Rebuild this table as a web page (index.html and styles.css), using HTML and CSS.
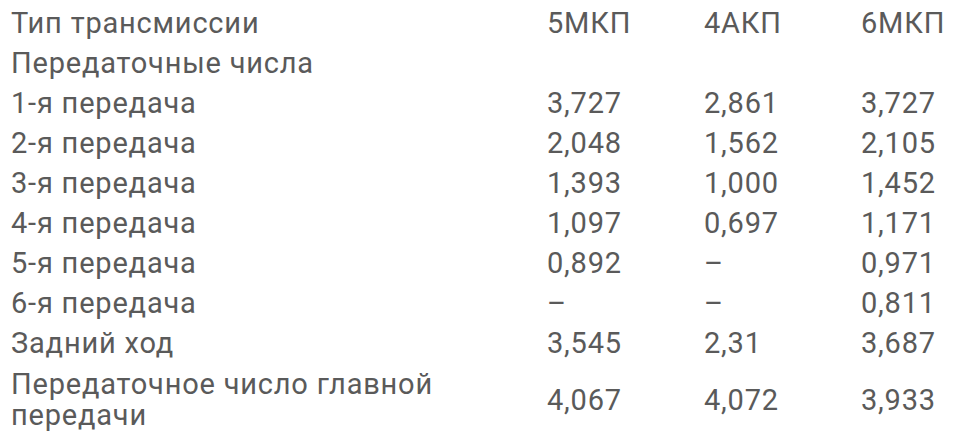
FILE: index.html
```html
<!DOCTYPE html>
<html lang="ru">
<head>
<meta charset="utf-8">
<link rel="stylesheet" href="styles.css">
</head>
<body>
<table class="spec">
<colgroup><col class="c-name"><col class="c-val"><col class="c-val"><col class="c-last"></colgroup>
<tbody>
<tr><td>Тип трансмиссии</td><td>5МКП</td><td>4АКП</td><td>6МКП</td></tr>
<tr><td>Передаточные числа</td><td></td><td></td><td></td></tr>
<tr><td>1-я передача</td><td>3,727</td><td>2,861</td><td>3,727</td></tr>
<tr><td>2-я передача</td><td>2,048</td><td>1,562</td><td>2,105</td></tr>
<tr><td>3-я передача</td><td>1,393</td><td>1,000</td><td>1,452</td></tr>
<tr><td>4-я передача</td><td>1,097</td><td>0,697</td><td>1,171</td></tr>
<tr><td>5-я передача</td><td>0,892</td><td>–</td><td>0,971</td></tr>
<tr><td>6-я передача</td><td>–</td><td>–</td><td>0,811</td></tr>
<tr><td>Задний ход</td><td>3,545</td><td>2,31</td><td>3,687</td></tr>
<tr class="last"><td class="wrap">Передаточное число главной передачи</td><td>4,067</td><td>4,072</td><td>3,933</td></tr>
</tbody>
</table>
</body>
</html>
```
FILE: styles.css
```css
html, body {
  margin: 0;
  padding: 0;
  background: #ffffff;
}
body {
  padding: 3px 0 0 11px;
  font-family: Roboto, "Noto Sans", sans-serif;
  font-size: 29px;
  letter-spacing: 0.8px;
  color: #5a5a5a;
}
.spec {
  border-collapse: collapse;
  table-layout: fixed;
  width: 949px;
}
.c-name { width: 536px; }
.c-val { width: 157px; }
.c-last { width: auto; }
.spec td {
  padding: 5px 0;
  line-height: 30px;
  vertical-align: middle;
  white-space: nowrap;
}
.spec tr.last td {
  padding-top: 6px;
  padding-bottom: 6px;
}
.spec td.wrap {
  white-space: normal;
  padding-right: 90px;
  line-height: 31px;
}
```
